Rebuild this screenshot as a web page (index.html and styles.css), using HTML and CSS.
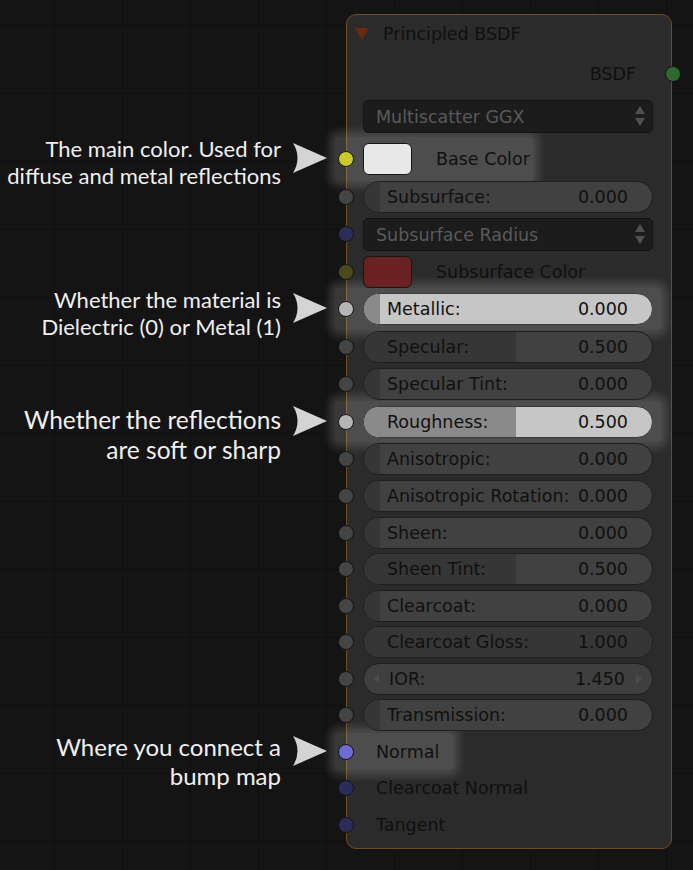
FILE: index.html
```html
<!DOCTYPE html>
<html lang="en">
<head>
    <meta charset="utf-8"/>
    <link rel="stylesheet" href="styles.css">
</head>
<body>
<div class="node">
    <div class="node_head">
        <span class="collapse"></span>
        <span>Principled BSDF</span>
    </div>
    <div class="node_out">
        <span>BSDF</span>
        <span class="socket out sock_shader"></span>
    </div>
    <div class="node_menu">
        <div class="menu">Multiscatter GGX
            <svg class="updown" viewBox="0 0 10 22"><path d="M0 9 L5 1 L10 9 Z M0 13 L5 21 L10 13 Z"/></svg>
        </div>
    </div>

    <div class="group group_a">
        <div class="row hl">
            <span class="glow glow_base"></span>
            <div class="note note_a">
                <div class="line">The main color. Used for</div>
                <div class="line">diffuse and metal reflections</div>
            </div>
            <svg class="pointer" viewBox="0 0 34 30"><path d="M0 0 L34 15 L0 30 Q9 15 0 0 Z"/></svg>
            <span class="socket sock_color_hl"></span>
            <span class="swatch swatch_white"></span>
            <span class="label">Base Color</span>
        </div>
        <div class="row">
            <span class="socket"></span>
            <div class="slider"><span class="fill" style="width:16px"></span><span class="name">Subsurface:</span><span class="num">0.000</span></div>
        </div>
        <div class="row">
            <span class="socket sock_vector"></span>
            <div class="menu">Subsurface Radius
                <svg class="updown" viewBox="0 0 10 22"><path d="M0 9 L5 1 L10 9 Z M0 13 L5 21 L10 13 Z"/></svg>
            </div>
        </div>
        <div class="row">
            <span class="socket sock_color"></span>
            <span class="swatch swatch_red"></span>
            <span class="label">Subsurface Color</span>
        </div>
        <div class="row hl">
            <span class="glow glow_wide"></span>
            <div class="note note_b">
                <div class="line">Whether the material is</div>
                <div class="line">Dielectric (0) or Metal (1)</div>
            </div>
            <svg class="pointer" viewBox="0 0 34 30"><path d="M0 0 L34 15 L0 30 Q9 15 0 0 Z"/></svg>
            <span class="socket sock_hl"></span>
            <div class="slider"><span class="fill" style="width:16px"></span><span class="name">Metallic:</span><span class="num">0.000</span></div>
        </div>
        <div class="row">
            <span class="socket"></span>
            <div class="slider"><span class="fill" style="width:152px"></span><span class="name">Specular:</span><span class="num">0.500</span></div>
        </div>
        <div class="row">
            <span class="socket"></span>
            <div class="slider"><span class="fill" style="width:16px"></span><span class="name">Specular Tint:</span><span class="num">0.000</span></div>
        </div>
        <div class="row hl">
            <span class="glow glow_wide"></span>
            <div class="note note_c">
                <div class="line">Whether the reflections</div>
                <div class="line">are soft or sharp</div>
            </div>
            <svg class="pointer" viewBox="0 0 34 30"><path d="M0 0 L34 15 L0 30 Q9 15 0 0 Z"/></svg>
            <span class="socket sock_hl"></span>
            <div class="slider"><span class="fill" style="width:152px"></span><span class="name">Roughness:</span><span class="num">0.500</span></div>
        </div>
        <div class="row">
            <span class="socket"></span>
            <div class="slider"><span class="fill" style="width:16px"></span><span class="name">Anisotropic:</span><span class="num">0.000</span></div>
        </div>
    </div>

    <div class="group group_b">
        <div class="row">
            <span class="socket"></span>
            <div class="slider"><span class="fill" style="width:16px"></span><span class="name">Anisotropic Rotation:</span><span class="num">0.000</span></div>
        </div>
        <div class="row">
            <span class="socket"></span>
            <div class="slider"><span class="fill" style="width:16px"></span><span class="name">Sheen:</span><span class="num">0.000</span></div>
        </div>
        <div class="row">
            <span class="socket"></span>
            <div class="slider"><span class="fill" style="width:152px"></span><span class="name">Sheen Tint:</span><span class="num">0.500</span></div>
        </div>
        <div class="row">
            <span class="socket"></span>
            <div class="slider"><span class="fill" style="width:16px"></span><span class="name">Clearcoat:</span><span class="num">0.000</span></div>
        </div>
        <div class="row">
            <span class="socket"></span>
            <div class="slider"><span class="fill" style="width:100%"></span><span class="name">Clearcoat Gloss:</span><span class="num">1.000</span></div>
        </div>
        <div class="row">
            <span class="socket"></span>
            <div class="slider field">
                <svg class="step" viewBox="0 0 6 10"><path d="M6 0 L0 5 L6 10 Z"/></svg>
                <span class="name">IOR:</span>
                <span class="num">1.450</span>
                <svg class="step" viewBox="0 0 6 10"><path d="M0 0 L6 5 L0 10 Z"/></svg>
            </div>
        </div>
        <div class="row">
            <span class="socket"></span>
            <div class="slider"><span class="fill" style="width:16px"></span><span class="name">Transmission:</span><span class="num">0.000</span></div>
        </div>
        <div class="row hl">
            <span class="glow glow_normal"></span>
            <div class="note note_d">
                <div class="line">Where you connect a</div>
                <div class="line">bump map</div>
            </div>
            <svg class="pointer" viewBox="0 0 34 30"><path d="M0 0 L34 15 L0 30 Q9 15 0 0 Z"/></svg>
            <span class="socket sock_vector_hl"></span>
            <span class="label plain">Normal</span>
        </div>
        <div class="row">
            <span class="socket sock_vector"></span>
            <span class="label plain">Clearcoat Normal</span>
        </div>
        <div class="row">
            <span class="socket sock_vector"></span>
            <span class="label plain">Tangent</span>
        </div>
    </div>
</div>
</body>
</html>
```

FILE: styles.css
```css
body {
    margin: 0;
    width: 693px;
    height: 870px;
    overflow: hidden;
    background-color: #141414;
    background-image: linear-gradient(90deg, #0f0f0f 1px, transparent 1px),
        linear-gradient(#0f0f0f 1px, transparent 1px);
    background-size: 68px 68px;
    background-position: 54px 25px;
    font-family: "DejaVu Sans", sans-serif;
    color: #101010;
}

.node {
    box-sizing: border-box;
    width: 326px;
    margin: 14px 0 0 346px;
    padding-bottom: 5px;
    border: 1px solid #6a4d25;
    border-radius: 10px;
    background: #2b2b2b;
    font-size: 17.5px;
}

.node_head {
    height: 37px;
    display: flex;
    align-items: center;
    gap: 14px;
    padding-left: 8px;
}

.collapse {
    width: 0;
    height: 0;
    border-left: 7px solid transparent;
    border-right: 7px solid transparent;
    border-top: 12px solid #6b2b12;
}

.node_out {
    position: relative;
    height: 44px;
    display: flex;
    align-items: center;
    justify-content: flex-end;
    padding-right: 35px;
}

.node_menu {
    padding: 3.5px 18px 7.75px 16px;
}

.menu {
    position: relative;
    z-index: 1;
    flex: 1;
    box-sizing: border-box;
    height: 33px;
    display: flex;
    align-items: center;
    padding: 2px 7px 0 12px;
    background: #1c1c1c;
    border: 1px solid #131313;
    border-radius: 5px;
    color: #5a5a5a;
}

.updown {
    width: 10px;
    height: 22px;
    margin: -2px 0 0 auto;
    fill: #505050;
}

.row {
    position: relative;
    box-sizing: border-box;
    display: flex;
    align-items: center;
    padding: 0 18px 0 16px;
}

.group_a .row {
    height: 37.5px;
}

.group_b .row {
    height: 36.5px;
}

.socket {
    position: absolute;
    z-index: 2;
    left: -9px;
    top: 50%;
    width: 16px;
    height: 16px;
    margin-top: -8px;
    box-sizing: border-box;
    border: 1px solid #161616;
    border-radius: 50%;
    background: #454545;
}

.socket.out {
    left: auto;
    right: -10px;
}

.sock_shader { background: #2e6a2f; }
.sock_color { background: #4a4a1c; }
.sock_color_hl { background: #c9c92a; }
.sock_vector { background: #2c2c5a; }
.sock_vector_hl { background: #6d6bd8; }
.sock_hl { background: #b5b5b5; }

.swatch {
    position: relative;
    z-index: 1;
    box-sizing: border-box;
    width: 49px;
    height: 32px;
    border: 1px solid #161616;
    border-radius: 6px;
}

.swatch_white { background: #e8e8e8; }
.swatch_red { background: #6a2121; }

.label {
    position: relative;
    z-index: 1;
    margin-left: 24px;
}

.label.plain {
    margin-left: 13px;
}

.slider {
    position: relative;
    z-index: 1;
    flex: 1;
    box-sizing: border-box;
    height: 32px;
    display: flex;
    align-items: center;
    padding: 0 24px 0 23px;
    overflow: hidden;
    background: #414141;
    border: 1px solid #1e1e1e;
    border-radius: 16px;
    white-space: nowrap;
}

.fill {
    position: absolute;
    left: 0;
    top: 0;
    bottom: 0;
    background: #363636;
}

.name,
.num {
    position: relative;
}

.num {
    margin-left: auto;
}

.slider.field {
    padding: 0 10px 0 9px;
    background: #3f3f3f;
}

.field .name {
    margin-left: 10px;
}

.field .num {
    margin-right: 11px;
}

.step {
    width: 6px;
    height: 10px;
    fill: #4b4b4b;
}

.hl .slider {
    background: #c6c6c6;
    border-color: #3a3a3a;
}

.hl .fill {
    background: #8a8a8a;
}

.glow {
    position: absolute;
    z-index: 0;
    background: rgba(255, 255, 255, 0.16);
    border-radius: 4px;
    box-shadow: 0 0 9px 6px rgba(255, 255, 255, 0.15);
}

.glow_base {
    left: -12px;
    top: -3px;
    width: 198px;
    height: 44px;
}

.glow_wide {
    left: -12px;
    right: 10px;
    top: -2px;
    bottom: -2px;
}

.glow_normal {
    left: -12px;
    top: 0;
    width: 118px;
    height: 37px;
}

.note {
    position: absolute;
    right: calc(100% + 66px);
    top: 0;
    white-space: nowrap;
    text-align: right;
    font-family: Lato, "Open Sans", sans-serif;
    font-size: 22px;
    color: #f0f0f0;
}

.note_a { top: -4px; }
.note_b { top: -3px; }
.note_a .line,
.note_b .line { height: 26.4px; line-height: 26.4px; }

.note_c { top: 2px; font-size: 24.5px; }
.note_c .line { height: 30px; line-height: 30px; }
.note_d { top: -1px; font-size: 24px; }
.note_d .line { height: 29px; line-height: 29px; }

.pointer {
    position: absolute;
    right: calc(100% + 20px);
    top: 50%;
    width: 34px;
    height: 30px;
    margin-top: -16px;
    fill: #d4d4d4;
}
```
